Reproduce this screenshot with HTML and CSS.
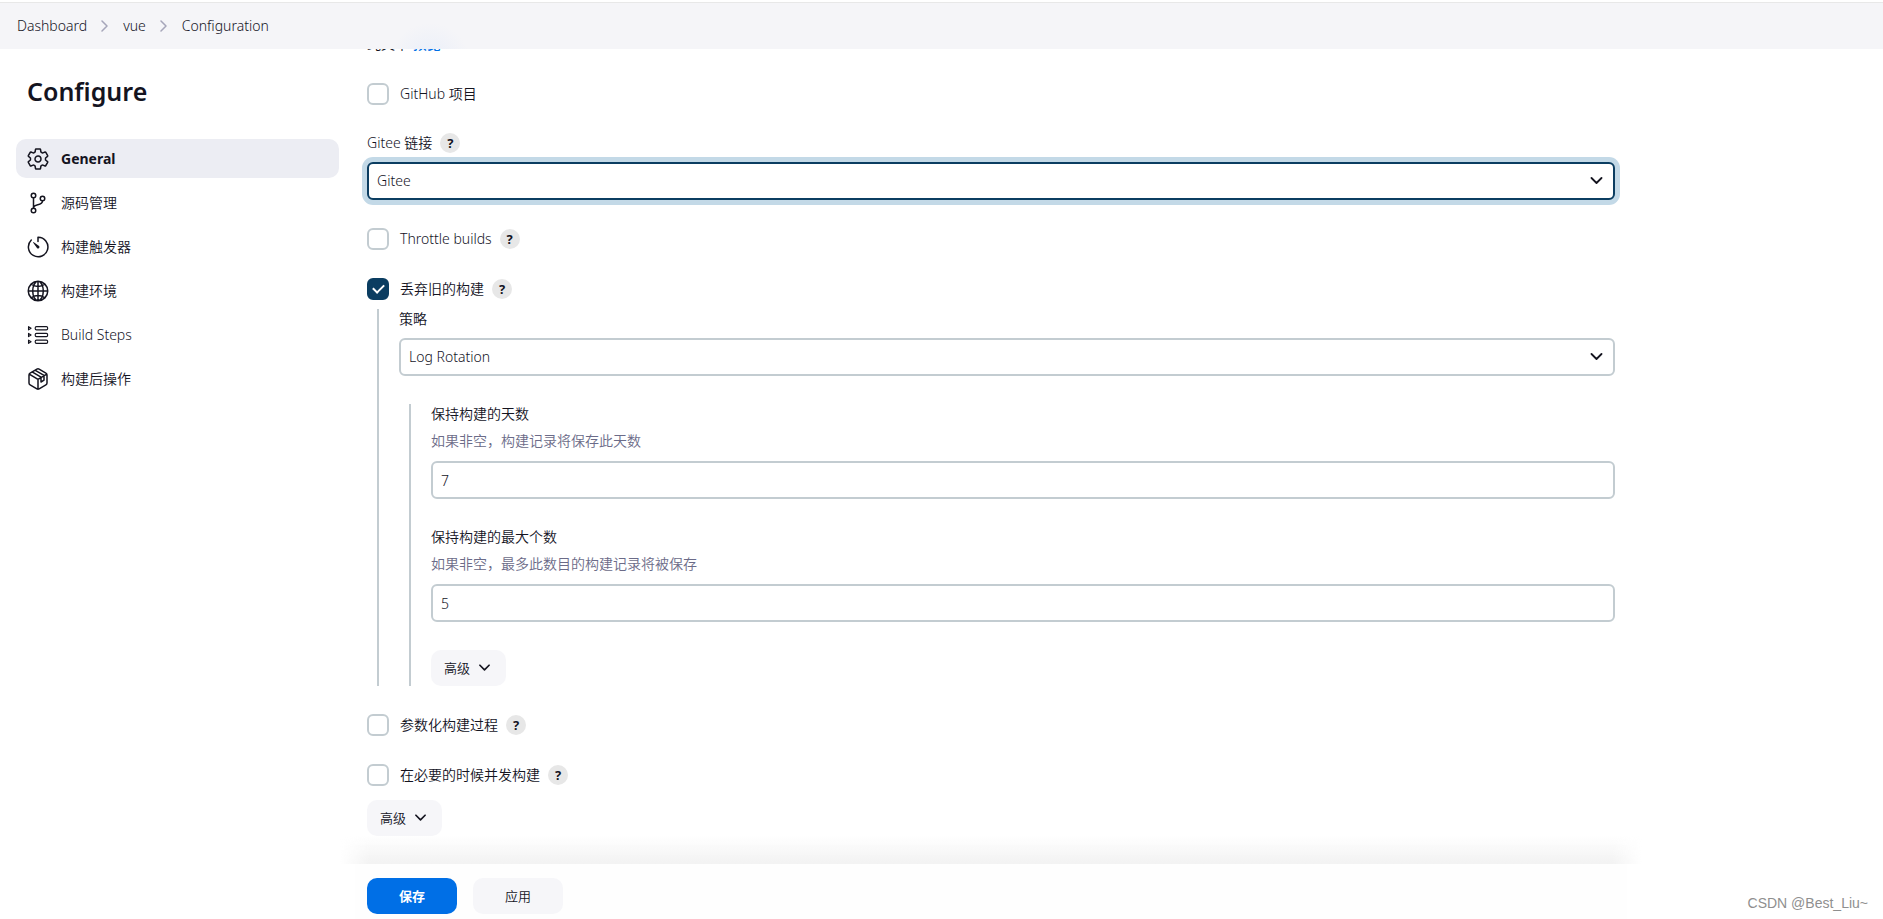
FILE: index.html
```html
<!DOCTYPE html>
<html lang="zh-CN">
<head>
  <meta charset="UTF-8" />
  <meta name="viewport" content="width=device-width, initial-scale=1" />
  <title>vue Config [Jenkins]</title>
  <link rel="stylesheet" href="styles.css">
</head>
<body>

<nav class="breadcrumbs">
  <a href="#">Dashboard</a>
  <svg class="separator" viewBox="0 0 8 12"><path d="M1 1l5 5-5 5"/></svg>
  <a href="#">vue</a>
  <svg class="separator" viewBox="0 0 8 12"><path d="M1 1l5 5-5 5"/></svg>
  <a href="#">Configuration</a>
</nav>

<div class="page">
  <aside class="side-panel">
    <h1>Configure</h1>
    <nav class="tasks">
      <a href="#" class="task active">
        <svg viewBox="0 0 512 512"><path d="M262.29 192.31a64 64 0 1057.4 57.4 64.13 64.13 0 00-57.4-57.4zM416.39 256a154.34 154.34 0 01-1.53 20.79l45.21 35.46a10.81 10.81 0 012.45 13.75l-42.77 74a10.81 10.81 0 01-13.14 4.59l-44.9-18.08a16.11 16.11 0 00-15.17 1.75A164.48 164.48 0 01325 400.8a15.94 15.94 0 00-8.82 12.14l-6.73 47.89a11.08 11.08 0 01-10.68 9.17h-85.54a11.11 11.11 0 01-10.69-8.87l-6.72-47.82a16.07 16.07 0 00-9-12.22 155.3 155.3 0 01-21.46-12.57 16 16 0 00-15.11-1.71l-44.89 18.07a10.81 10.81 0 01-13.14-4.58l-42.77-74a10.8 10.8 0 012.45-13.75l38.21-30a16.05 16.05 0 006-14.08c-.36-4.17-.58-8.33-.58-12.5s.21-8.27.58-12.35a16 16 0 00-6.07-13.94l-38.19-30A10.81 10.81 0 0149.48 186l42.77-74a10.81 10.81 0 0113.14-4.59l44.9 18.08a16.11 16.11 0 0015.17-1.75A164.48 164.48 0 01187 111.2a15.94 15.94 0 008.82-12.14l6.73-47.89A11.08 11.08 0 01213.23 42h85.54a11.11 11.11 0 0110.69 8.87l6.72 47.82a16.07 16.07 0 009 12.22 155.3 155.3 0 0121.46 12.57 16 16 0 0015.11 1.71l44.89-18.07a10.81 10.81 0 0113.14 4.58l42.77 74a10.8 10.8 0 01-2.45 13.75l-38.21 30a16.05 16.05 0 00-6.05 14.08c.33 4.14.55 8.3.55 12.47z"/></svg>
        General
      </a>
      <a href="#" class="task">
        <svg viewBox="0 0 512 512"><circle cx="160" cy="96" r="48"/><circle cx="160" cy="416" r="48"/><circle cx="352" cy="160" r="48"/><path d="M160 368V144M352 208c0 128-192 48-192 160"/></svg>
        源码管理
      </a>
      <a href="#" class="task">
        <svg viewBox="0 0 512 512"><path d="M113 108a208 208 0 10143-60v92"/><path class="solid" d="M234 278L154 167a9 9 0 0113-13l111 80a31 31 0 11-44 44z"/></svg>
        构建触发器
      </a>
      <a href="#" class="task">
        <svg viewBox="0 0 512 512"><path d="M256 48a208 208 0 100 416 208 208 0 000-416zM256 48c-58 0-113 93-113 208s55 208 113 208 113-93 113-208S314 48 256 48zM117 117c38 27 87 43 139 43s101-16 139-43M395 395c-38-27-87-43-139-43s-101 16-139 43M256 48v416M464 256H48"/></svg>
        构建环境
      </a>
      <a href="#" class="task">
        <svg class="thin" viewBox="0 0 512 512"><rect x="196" y="78" width="266" height="68" rx="28"/><rect x="196" y="222" width="266" height="68" rx="28"/><rect x="196" y="366" width="266" height="68" rx="28"/><path d="M54 78l54 34-54 34zM54 222l54 34-54 34zM54 366l54 34-54 34z"/></svg>
        Build Steps
      </a>
      <a href="#" class="task">
        <svg viewBox="0 0 512 512"><path d="M448 341V171a48 48 0 00-24-42L280 46a48 48 0 00-48 0L88 129a48 48 0 00-24 42v170a48 48 0 0024 42l144 83a48 48 0 0048 0l144-83a48 48 0 0024-42zM69 153l187 111 187-111M256 464V264M130 104l190 112v104l64-38V178L190 68"/></svg>
        构建后操作
      </a>
    </nav>
  </aside>

  <main class="main-panel">
    <form class="config">
      <p class="preview">纯文本 <a href="#">预览</a></p>

      <div class="check-row">
        <input type="checkbox" id="github">
        <label for="github">GitHub 项目</label>
      </div>

      <div class="field">
        <div class="field-label">
          <label for="gitee">Gitee 链接</label>
          <button type="button" class="help">?</button>
        </div>
        <div class="select focused">
          <select id="gitee"><option>Gitee</option></select>
          <svg viewBox="0 0 12 8"><path d="M1 1l5 5 5-5"/></svg>
        </div>
      </div>

      <div class="check-row">
        <input type="checkbox" id="throttle">
        <label for="throttle">Throttle builds</label>
        <button type="button" class="help">?</button>
      </div>

      <div class="check-row open">
        <input type="checkbox" id="discard" checked>
        <label for="discard">丢弃旧的构建</label>
        <button type="button" class="help">?</button>
      </div>

      <div class="nested">
        <div class="field strategy">
          <label for="strategy">策略</label>
          <div class="select">
            <select id="strategy"><option>Log Rotation</option></select>
            <svg viewBox="0 0 12 8"><path d="M1 1l5 5 5-5"/></svg>
          </div>
        </div>
        <div class="nested">
          <div class="field">
            <label for="days">保持构建的天数</label>
            <p class="description">如果非空，构建记录将保存此天数</p>
            <input type="text" id="days" value="7">
          </div>
          <div class="field">
            <label for="num">保持构建的最大个数</label>
            <p class="description">如果非空，最多此数目的构建记录将被保存</p>
            <input type="text" id="num" value="5">
          </div>
          <button type="button" class="btn advanced">高级 <svg viewBox="0 0 12 8"><path d="M1 1l5 5 5-5"/></svg></button>
        </div>
      </div>

      <div class="check-row">
        <input type="checkbox" id="params">
        <label for="params">参数化构建过程</label>
        <button type="button" class="help">?</button>
      </div>

      <div class="check-row last">
        <input type="checkbox" id="concurrent">
        <label for="concurrent">在必要的时候并发构建</label>
        <button type="button" class="help">?</button>
      </div>

      <button type="button" class="btn advanced">高级 <svg viewBox="0 0 12 8"><path d="M1 1l5 5 5-5"/></svg></button>
    </form>

    <div class="bottom-bar">
      <button type="button" class="btn primary">保存</button>
      <button type="button" class="btn">应用</button>
    </div>
  </main>
</div>

<div class="watermark">CSDN @Best_Liu~</div>

</body>
</html>
```
FILE: styles.css
```css
* {
  box-sizing: border-box;
}
body {
  margin: 0;
  height: 100vh;
  overflow: hidden;
  display: flex;
  flex-direction: column;
  font-family: "Noto Sans", "Noto Sans CJK SC", sans-serif;
  font-size: 14px;
  line-height: 20px;
  font-weight: 350;
  color: #14141f;
  background: #fff;
}
a {
  color: inherit;
  text-decoration: none;
}
p {
  margin: 0;
}
svg {
  fill: none;
  stroke: currentColor;
  stroke-linecap: round;
  stroke-linejoin: round;
}
button, input, select {
  font: inherit;
  color: inherit;
}

.breadcrumbs {
  flex: none;
  display: flex;
  align-items: center;
  height: 47px;
  margin-top: 2px;
  padding: 0 17px;
  border-top: 1px solid #e8e8e8;
  background: radial-gradient(circle at 430px 60px, #e9eef9, transparent 40px) #f5f5f8;
}
.separator {
  width: 8px;
  height: 12px;
  margin: 0 14px;
  stroke: #a6a6ba;
  stroke-width: 1.5;
}

.page {
  flex: 1;
  min-height: 0;
  display: flex;
}
.side-panel {
  flex: none;
  width: 339px;
  margin-left: 16px;
  padding-top: 25px;
}
h1 {
  margin: 0 0 31px;
  padding-left: 11px;
  font-size: 25px;
  line-height: 34px;
  font-weight: 600;
}
.tasks {
  display: flex;
  flex-direction: column;
  gap: 6px;
  margin-right: 16px;
}
.task {
  display: flex;
  align-items: center;
  gap: 11px;
  height: 38px;
  padding: 0 10px;
  border-radius: 10px;
}
.task svg {
  width: 24px;
  height: 24px;
  stroke-width: 32;
}
.task .thin {
  stroke-width: 24;
}
.task .solid {
  fill: currentColor;
  stroke: none;
}
.task.active {
  height: 39px;
  background: #ecedf3;
  font-weight: 700;
}

.main-panel {
  flex: 1;
  min-width: 0;
  max-width: 1272px;
  display: flex;
  flex-direction: column;
}
.config {
  flex: 1;
  min-height: 0;
  overflow: hidden;
  padding: 0 12px;
}
/* scrolled almost out of view, under the breadcrumbs */
.preview {
  height: 20px;
  margin: -15px 0 29px;
}
.preview a {
  color: #006fe6;
  font-weight: 500;
}
.check-row {
  display: flex;
  align-items: center;
  height: 22px;
  margin-bottom: 28px;
}
.check-row.open {
  margin-bottom: 9px;
}
.check-row.last {
  margin-bottom: 14px;
}
input[type="checkbox"] {
  appearance: none;
  width: 22px;
  height: 22px;
  margin: 0 11px 0 0;
  border: 2px solid #c3ccd1;
  border-radius: 6px;
  background: #fff;
}
input[type="checkbox"]:checked {
  display: grid;
  place-items: center;
  border-color: #0b3d61;
  background: #0b3d61;
}
input[type="checkbox"]:checked::after {
  content: "";
  width: 5px;
  height: 9px;
  margin-bottom: 3px;
  border: solid #fff;
  border-width: 0 2px 2px 0;
  transform: rotate(45deg);
}
.help {
  width: 20px;
  height: 20px;
  margin-left: 8px;
  padding: 0;
  border: none;
  border-radius: 50%;
  background: #e7e7e7;
  font-size: 13px;
  line-height: 20px;
  font-weight: 700;
}

.field {
  margin-bottom: 28px;
}
.field label {
  display: block;
}
.field-label {
  display: flex;
  align-items: center;
  height: 20px;
  margin-bottom: 9px;
}
.strategy label {
  margin-bottom: 9px;
}
.description {
  margin: 7px 0 10px;
  color: #6b6b88;
}
.select {
  display: grid;
  align-items: center;
}
.select select, .select svg {
  grid-area: 1 / 1;
}
.select svg {
  width: 13px;
  height: 8px;
  stroke-width: 1.8;
  justify-self: end;
  margin-right: 12px;
  pointer-events: none;
}
select, input[type="text"] {
  appearance: none;
  display: block;
  width: 100%;
  height: 38px;
  padding: 0 8px;
  border: 2px solid #c3ccd1;
  border-radius: 6px;
  background: #fff;
  outline: none;
}
.focused select {
  border-color: #0b3d61;
  box-shadow: 0 0 0 5px #c3d9e7;
}

.nested {
  margin: 0 0 28px 10px;
  padding-left: 20px;
  border-left: 2px solid #c3ccd1;
}
.nested .nested {
  margin-bottom: 0;
}

.btn {
  min-width: 90px;
  height: 36px;
  padding: 0 13px;
  border: none;
  border-radius: 10px;
  background: #f6f6f9;
  font-size: 13px;
}
.advanced {
  display: flex;
  align-items: center;
  gap: 9px;
  min-width: 75px;
}
.advanced svg {
  width: 11px;
  height: 8px;
  stroke-width: 1.8;
}
.btn.primary {
  background: #006fe6;
  color: #fff;
  font-weight: 700;
}
.bottom-bar {
  flex: none;
  position: relative;
  display: flex;
  gap: 16px;
  height: 55px;
  padding: 14px 12px 0;
  background: #fefefe;
}
/* fade above the sticky buttons */
.bottom-bar::before {
  content: "";
  position: absolute;
  left: -15px;
  right: -15px;
  bottom: 100%;
  height: 28px;
  background: linear-gradient(to top, #f2f2f2, transparent);
  mask-image: linear-gradient(to right, transparent, #000 30px, #000 calc(100% - 30px), transparent);
  pointer-events: none;
}
.watermark {
  position: absolute;
  right: 15px;
  bottom: 6px;
  font-family: "Liberation Sans", sans-serif;
  font-size: 14px;
  color: #8f8f8f;
}
```
